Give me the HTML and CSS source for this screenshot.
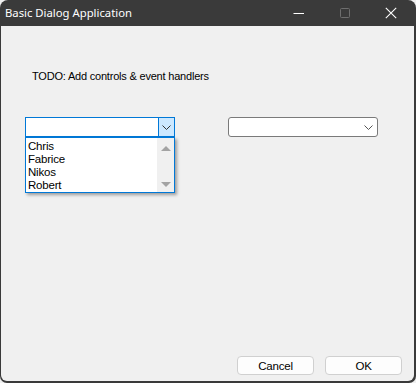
FILE: index.html
```html
<!DOCTYPE html>
<html lang="en">
<head>
    <meta charset="UTF-8">
    <title>Basic Dialog Application</title>
    <link rel="stylesheet" href="styles.css">
</head>
<body>
    <div class="window">
        <div class="title-bar">
            <span class="title">Basic Dialog Application</span>
            <div class="caption-buttons">
                <span class="caption-btn">
                    <svg width="12" height="12" viewBox="0 0 12 12"><path d="M0.5 6.5h10.5" stroke="#fff" stroke-width="1"/></svg>
                </span>
                <span class="caption-btn">
                    <svg width="12" height="12" viewBox="0 0 12 12"><rect x="1.5" y="1.5" width="9" height="9" rx="1" fill="none" stroke="#6e6e6e" stroke-width="1"/></svg>
                </span>
                <span class="caption-btn">
                    <svg width="12" height="12" viewBox="0 0 12 12"><path d="M0.8 0.8L11.2 11.2M11.2 0.8L0.8 11.2" stroke="#fff" stroke-width="1.1"/></svg>
                </span>
            </div>
        </div>

        <div class="client">
            <p class="static-text">TODO: Add controls &amp; event handlers</p>

            <div class="combo-row">
                <div class="combo combo-open">
                    <div class="combo-edit"></div>
                    <div class="combo-btn">
                        <svg width="9" height="5" viewBox="0 0 9 5"><path d="M0.5 0.5L4.5 4.5L8.5 0.5" fill="none" stroke="#333" stroke-width="1"/></svg>
                    </div>
                    <div class="drop-list">
                        <ul class="items">
                            <li>Chris</li>
                            <li>Fabrice</li>
                            <li>Nikos</li>
                            <li>Robert</li>
                        </ul>
                        <div class="scrollbar">
                            <span class="arrow-up"></span>
                            <span class="arrow-down"></span>
                        </div>
                    </div>
                </div>

                <div class="combo combo-closed">
                    <div class="combo-edit"></div>
                    <div class="combo-chevron">
                        <svg width="9" height="5" viewBox="0 0 9 5"><path d="M0.5 0.5L4.5 4.5L8.5 0.5" fill="none" stroke="#555" stroke-width="1"/></svg>
                    </div>
                </div>
            </div>

            <div class="button-row">
                <button class="dlg-btn">Cancel</button>
                <button class="dlg-btn">OK</button>
            </div>
        </div>
    </div>
</body>
</html>
```

FILE: styles.css
```css
* {
    margin: 0;
    padding: 0;
    box-sizing: border-box;
}

html, body {
    width: 416px;
    height: 383px;
    overflow: hidden;
    background-color: #f0f0f0;
}

.window {
    width: 416px;
    height: 383px;
    display: flex;
    flex-direction: column;
    background-color: #3a3a3a;
    border-radius: 8px 8px 7px 7px;
    padding: 0 2px 2px 1px;
}

.title-bar {
    height: 26px;
    display: flex;
    align-items: center;
    color: #fff;
}

.title {
    font-family: "Noto Sans", "Open Sans", sans-serif;
    font-size: 11.3px;
    padding-left: 4px;
    padding-bottom: 1px;
}

.caption-buttons {
    margin-left: auto;
    display: flex;
    height: 100%;
}

.caption-btn {
    width: 46px;
    display: flex;
    align-items: center;
    justify-content: center;
    padding-bottom: 1px;
}

.client {
    flex: 1;
    display: flex;
    flex-direction: column;
    background-color: #f0f0f0;
    border-radius: 0 0 6px 6px;
    font-family: "Liberation Sans", Arial, sans-serif;
    font-size: 11px;
    letter-spacing: -0.2px;
    color: #000;
}

.static-text {
    margin: 43px 0 0 31px;
    line-height: 14px;
}

.combo-row {
    display: flex;
    gap: 53px;
    margin: 34px 0 0 24px;
}

.combo {
    position: relative;
    height: 20px;
    display: flex;
    background-color: #fff;
}

.combo-edit {
    flex: 1;
}

.combo-open {
    width: 150px;
    border: 1px solid #0078d7;
}

.combo-btn {
    width: 16px;
    background-color: #cce8ff;
    border-left: 1px solid #0078d7;
    display: flex;
    align-items: center;
    justify-content: center;
}

.combo-closed {
    width: 150px;
    border: 1px solid #7a7a7a;
    border-radius: 3px;
}

.combo-chevron {
    width: 18px;
    display: flex;
    align-items: center;
    justify-content: center;
}

.drop-list {
    position: absolute;
    top: 19px;
    left: -1px;
    width: 150px;
    height: 56px;
    display: flex;
    background-color: #fff;
    border: 1px solid #0078d7;
    box-shadow: 2px 2px 3px rgba(0, 0, 0, 0.35);
}

.items {
    flex: 1;
    list-style: none;
    padding: 1px 0 0 2px;
    font-size: 11.5px;
}

.items li {
    height: 13px;
    line-height: 14px;
}

.scrollbar {
    width: 17px;
    background-color: #f0f0f0;
    display: flex;
    flex-direction: column;
    align-items: center;
    justify-content: space-between;
    padding: 8px 0 5px;
}

.arrow-up {
    width: 0;
    height: 0;
    border-left: 5px solid transparent;
    border-right: 5px solid transparent;
    border-bottom: 5px solid #a3a3a3;
}

.arrow-down {
    width: 0;
    height: 0;
    border-left: 5px solid transparent;
    border-right: 5px solid transparent;
    border-top: 5px solid #a3a3a3;
}

.button-row {
    margin-top: auto;
    display: flex;
    justify-content: flex-end;
    gap: 11px;
    padding: 0 12px 6px 0;
}

.dlg-btn {
    width: 77px;
    height: 19px;
    font-family: "Liberation Sans", Arial, sans-serif;
    font-size: 11.5px;
    letter-spacing: -0.2px;
    color: #000;
    background-color: #fdfdfd;
    border: 1px solid #d0d0d0;
    border-radius: 4px;
}
```
